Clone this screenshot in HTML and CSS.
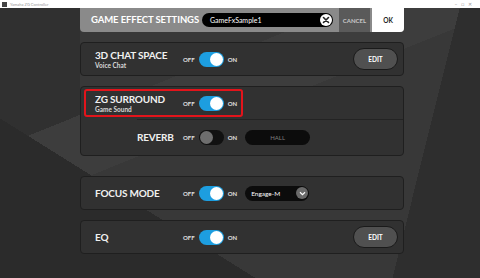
FILE: index.html
```html
<!DOCTYPE html>
<html>
<head>
    <title>Yamaha ZG Controller</title>
    <link rel="stylesheet" href="styles.css">
</head>
<body>
    <!-- Window title bar -->
    <div class="titlebar">
        <span class="app-icon"></span>
        <span class="app-name">Yamaha ZG Controller</span>
        <span class="win-ctrl">&#8211;&nbsp;&nbsp;&nbsp;&#9633;&nbsp;&nbsp;&nbsp;&#10005;</span>
    </div>

    <div class="screen">
        <div class="panel">
            <!-- Header -->
            <div class="header">
                <span class="header-title">GAME EFFECT SETTINGS</span>
                <div class="name-input">
                    <span class="name-text">GameFxSample1</span>
                    <span class="clear-btn">
                        <svg width="8" height="8" viewBox="0 0 8 8"><path d="M1.5 1.5 L6.5 6.5 M6.5 1.5 L1.5 6.5" stroke="#222" stroke-width="1.6" stroke-linecap="round"/></svg>
                    </span>
                </div>
                <span class="btn-cancel">CANCEL</span>
                <span class="btn-ok">OK</span>
            </div>

            <!-- 3D Chat Space -->
            <div class="card">
                <div class="row">
                    <div class="label">
                        <div class="title">3D CHAT SPACE</div>
                        <div class="sub">Voice Chat</div>
                    </div>
                    <div class="switch-group">
                        <span class="sw-text">OFF</span>
                        <span class="switch on"><span class="knob"></span></span>
                        <span class="sw-text">ON</span>
                    </div>
                    <span class="btn-edit">EDIT</span>
                </div>
            </div>

            <!-- ZG Surround -->
            <div class="card">
                <div class="row highlight">
                    <div class="label">
                        <div class="title">ZG SURROUND</div>
                        <div class="sub">Game Sound</div>
                    </div>
                    <div class="switch-group">
                        <span class="sw-text">OFF</span>
                        <span class="switch on"><span class="knob"></span></span>
                        <span class="sw-text">ON</span>
                    </div>
                </div>
                <div class="separator"></div>
                <div class="row reverb">
                    <div class="label short">
                        <div class="title">REVERB</div>
                    </div>
                    <div class="switch-group">
                        <span class="sw-text">OFF</span>
                        <span class="switch"><span class="knob"></span></span>
                        <span class="sw-text">ON</span>
                    </div>
                    <span class="pill-select dim">HALL</span>
                </div>
            </div>

            <!-- Focus Mode -->
            <div class="card spaced">
                <div class="row">
                    <div class="label">
                        <div class="title">FOCUS MODE</div>
                    </div>
                    <div class="switch-group">
                        <span class="sw-text">OFF</span>
                        <span class="switch on"><span class="knob"></span></span>
                        <span class="sw-text">ON</span>
                    </div>
                    <span class="pill-select dropdown">
                        <span>Engage-M</span>
                        <span class="chevron">
                            <svg width="7" height="5" viewBox="0 0 7 5"><path d="M1 1.2 L3.5 3.6 L6 1.2" fill="none" stroke="#fff" stroke-width="1.2"/></svg>
                        </span>
                    </span>
                </div>
            </div>

            <!-- EQ -->
            <div class="card">
                <div class="row">
                    <div class="label">
                        <div class="title">EQ</div>
                    </div>
                    <div class="switch-group">
                        <span class="sw-text">OFF</span>
                        <span class="switch on"><span class="knob"></span></span>
                        <span class="sw-text">ON</span>
                    </div>
                    <span class="btn-edit">EDIT</span>
                </div>
            </div>
        </div>
    </div>
</body>
</html>
```

FILE: styles.css
```css
/* Yamaha ZG Controller - game effect settings */

body {
    margin: 0;
    font-family: Lato, "Noto Sans", sans-serif;
    color: #fff;
    background: #333;
    overflow: hidden;
}

.titlebar {
    height: 8px;
    background: #fff;
    display: flex;
    align-items: center;
    padding: 0 2px;
}

.app-icon {
    width: 5px;
    height: 5px;
    background: #444;
}

.app-name {
    font-size: 4px;
    line-height: 5px;
    color: #999;
    margin-left: 3px;
}

.win-ctrl {
    margin-left: auto;
    margin-right: 6px;
    font-size: 5px;
    line-height: 6px;
    color: #999;
}

.screen {
    height: 270px;
    background:
        linear-gradient(32deg, #2b2b2b 0 28%, transparent 28%),
        linear-gradient(104deg, transparent 0 84%, #2e2e2e 84%),
        linear-gradient(158deg, transparent 0 30%, #3d3d3d 30% 44%, transparent 44%),
        linear-gradient(to right, #303030 0 80px, #383838 80px);
}

.panel {
    width: 324px;
    margin-left: 80px;
}

/* header */

.header {
    height: 24px;
    background: #8a8a8a;
    border-radius: 0 0 4px 4px;
    display: flex;
    align-items: center;
}

.header-title {
    width: 111px;
    font-size: 9.5px;
    line-height: 12px;
    font-weight: 700;
    letter-spacing: -0.1px;
    margin-left: 11px;
    white-space: nowrap;
    flex-shrink: 0;
}

.name-input {
    width: 131px;
    height: 14px;
    flex-shrink: 0;
    background: #000;
    border-radius: 7px;
    display: flex;
    align-items: center;
    box-sizing: border-box;
    padding: 0 1px 0 8px;
}

.name-text {
    font-size: 7px;
    line-height: 8px;
}

.clear-btn {
    margin-left: auto;
    width: 12px;
    height: 12px;
    border-radius: 50%;
    background: #fff;
    display: flex;
    align-items: center;
    justify-content: center;
}

.btn-cancel {
    margin-left: 6px;
    width: 31px;
    height: 24px;
    flex-shrink: 0;
    background: #5a5a5a;
    color: #c8c8c8;
    font-size: 6px;
    font-weight: 700;
    display: flex;
    align-items: center;
    justify-content: center;
}

.btn-ok {
    margin-left: 2px;
    width: 32px;
    height: 24px;
    flex-shrink: 0;
    background: #fff;
    color: #222;
    font-size: 6.5px;
    font-weight: 700;
    border-radius: 0 0 4px 0;
    display: flex;
    align-items: center;
    justify-content: center;
}

/* cards */

.card {
    margin-top: 10px;
    background: #313131;
    border: 1px solid #1f1f1f;
    border-radius: 4px;
}

.card.spaced {
    margin-top: 20px;
}

.row {
    height: 28px;
    box-sizing: border-box;
    margin: 2px 3px;
    border: 2px solid transparent;
    border-radius: 3px;
    padding-left: 9px;
    display: flex;
    align-items: center;
}

.row.highlight {
    width: 159px;
    border-color: #e3141b;
}

.row.reverb {
    height: 31px;
    padding-left: 51px;
}

.separator {
    height: 1px;
    background: #232323;
    margin-left: 56px;
}

.label {
    width: 88px;
    flex-shrink: 0;
}

.label.short {
    width: 46px;
}

.title {
    font-size: 10px;
    font-weight: 700;
    line-height: 11px;
    letter-spacing: -0.2px;
    color: #f0f0f0;
    white-space: nowrap;
}

.sub {
    font-size: 6.5px;
    font-weight: 700;
    line-height: 7px;
    margin-top: 1px;
    color: #d8d8d8;
    white-space: nowrap;
}

.switch-group {
    display: flex;
    align-items: center;
}

.sw-text {
    font-size: 6px;
    line-height: 7px;
    font-weight: 700;
    color: #e0e0e0;
}

.switch {
    width: 25px;
    height: 15px;
    border-radius: 8px;
    background: #111;
    margin: 0 4px 0 4px;
    position: relative;
}

.switch .knob {
    position: absolute;
    top: 1px;
    left: 1px;
    width: 13px;
    height: 13px;
    border-radius: 50%;
    background: #6e6e6e;
}

.switch.on {
    background: #1d9ee0;
}

.switch.on .knob {
    left: 11px;
    background: #fff;
}

.pill-select {
    margin-left: 8px;
    width: 65px;
    height: 15px;
    border-radius: 8px;
    background: #0c0c0c;
    font-size: 6px;
    line-height: 7px;
    display: flex;
    align-items: center;
    box-sizing: border-box;
}

.pill-select.dim {
    justify-content: center;
    color: #7e7e7e;
}

.pill-select.dropdown {
    width: 64px;
    padding: 0 1px 0 6px;
    font-size: 6.5px;
}

.chevron {
    margin-left: auto;
    width: 12px;
    height: 12px;
    border-radius: 50%;
    background: #6a6a6a;
    display: flex;
    align-items: center;
    justify-content: center;
}

.btn-edit {
    margin-left: auto;
    width: 45px;
    height: 22px;
    box-sizing: border-box;
    border: 1px solid #1a1a1a;
    border-radius: 11px;
    background: #505050;
    font-size: 6.5px;
    line-height: 7px;
    font-weight: 700;
    display: flex;
    align-items: center;
    justify-content: center;
}
```
